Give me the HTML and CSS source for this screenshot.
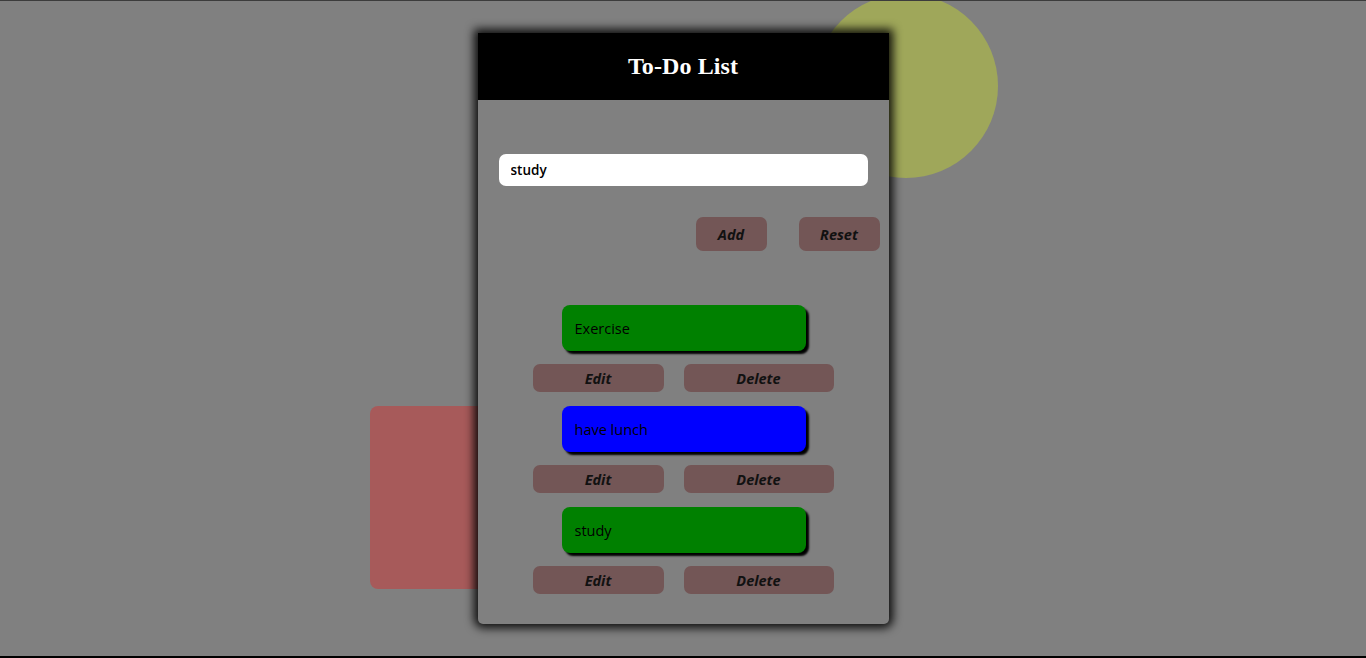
FILE: index.html
```html
<!DOCTYPE html>
<html lang="en">
<head>
<meta charset="utf-8">
<title>To-Do List</title>
<link rel="stylesheet" href="styles.css">
</head>
<body>
<div class="stage">
  <div class="blob blob-circle"></div>
  <div class="blob blob-rect"></div>
  <main class="card">
    <header class="card-head"><h1 class="title">To-Do List</h1></header>
    <section class="card-body">
      <div class="entry"><input class="entry-input" type="text" value="study"></div>
      <div class="controls">
        <button class="btn btn-add">Add</button>
        <button class="btn btn-reset">Reset</button>
      </div>
      <ul class="tasks">
        <li class="task">
          <div class="task-box green">Exercise</div>
          <div class="task-actions"><button class="act act-edit">Edit</button><button class="act act-delete">Delete</button></div>
        </li>
        <li class="task">
          <div class="task-box blue">have lunch</div>
          <div class="task-actions"><button class="act act-edit">Edit</button><button class="act act-delete">Delete</button></div>
        </li>
        <li class="task">
          <div class="task-box green">study</div>
          <div class="task-actions"><button class="act act-edit">Edit</button><button class="act act-delete">Delete</button></div>
        </li>
      </ul>
    </section>
  </main>
</div>
</body>
</html>
```
FILE: styles.css
```css
* { box-sizing: border-box; }
html, body { margin: 0; padding: 0; }
body {
  background: #808080;
  font-family: "Open Sans", "Lato", sans-serif;
  height: 658px;
  overflow: hidden;
}
.stage {
  position: relative;
  height: 658px;
  border-top: 1px solid #3c3c3c;
  border-bottom: 2px solid #000;
  display: flex;
  justify-content: center;
  align-items: flex-start;
  overflow: hidden;
}
.blob { position: absolute; }
.blob-circle {
  left: 814px; top: -7px;
  width: 184px; height: 184px;
  border-radius: 50%;
  background: #9fa75a;
}
.blob-rect {
  left: 370px; top: 405px;
  width: 150px; height: 183px;
  border-radius: 8px;
  background: #a75a5a;
}
.card {
  position: relative;
  z-index: 1;
  margin-top: 32px;
  width: 411px;
  height: 591px;
  background: #808080;
  border-radius: 0 0 5px 5px;
  box-shadow: 0 0 10px 4px rgba(0,0,0,0.9);
  display: flex;
  flex-direction: column;
}
.card-head {
  height: 67px;
  background: #000;
  display: flex;
  align-items: center;
  justify-content: center;
}
.title {
  margin: 0;
  color: #fff;
  font-family: "Liberation Serif", "Times New Roman", serif;
  font-weight: bold;
  font-size: 24px;
  letter-spacing: 0.1px;
}
.card-body {
  display: flex;
  flex-direction: column;
  padding-top: 54px;
}
.entry { padding-left: 21px; }
.entry-input {
  display: block;
  width: 369px;
  height: 32px;
  border: none;
  border-radius: 7px;
  background: #fff;
  padding: 0 12px;
  font-family: "Open Sans", sans-serif;
  font-size: 13.5px;
  font-weight: 600;
  color: #000;
  outline: none;
}
.controls {
  display: flex;
  justify-content: flex-end;
  gap: 32px;
  padding-right: 9px;
  margin-top: 31px;
}
.btn {
  height: 34px;
  border: none;
  border-radius: 7px;
  background: #735656;
  color: #111;
  font-family: "Open Sans", sans-serif;
  font-weight: bold;
  font-style: italic;
  font-size: 14.5px;
  padding: 0;
}
.btn-add { width: 71px; }
.btn-reset { width: 81px; }
.tasks {
  list-style: none;
  margin: 54px 0 0;
  padding: 0;
  display: flex;
  flex-direction: column;
  align-items: center;
  gap: 14px;
}
.task {
  display: flex;
  flex-direction: column;
  align-items: center;
  gap: 13px;
}
.task-box {
  width: 244px;
  height: 46px;
  border-radius: 8px;
  margin-left: 1px;
  padding-left: 13px;
  display: flex;
  align-items: center;
  font-size: 14.5px;
  font-weight: 500;
  color: #000;
  box-shadow: 3px 3px 2px #000;
}
.green { background: #008000; }
.blue { background: #0000ff; }
.task-actions {
  display: flex;
  gap: 20px;
}
.act {
  height: 28px;
  border: none;
  border-radius: 7px;
  background: #735656;
  color: #111;
  font-family: "Open Sans", sans-serif;
  font-weight: bold;
  font-style: italic;
  font-size: 14.5px;
  padding: 0;
}
.act-edit { width: 131px; }
.act-delete { width: 150px; }
```
